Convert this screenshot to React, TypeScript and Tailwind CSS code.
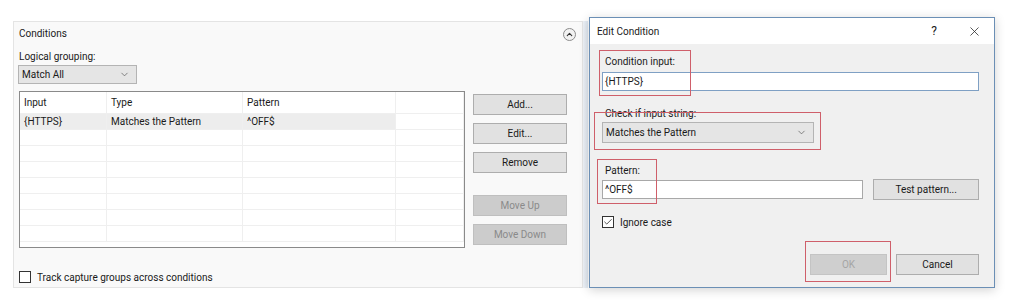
import { Check, ChevronDown, ChevronUp, X } from "lucide-react";

const font = "font-['Roboto','Segoe_UI',sans-serif] text-[10px] text-[#1a1a1a]";

function Button({ label, disabled, className }: { label: string; disabled?: boolean; className?: string }) {
  return (
    <div
      className={
        "flex items-center justify-center h-[21px] border " +
        (disabled
          ? "bg-[#cccccc] border-[#bfbfbf] text-[#8a8a8a] "
          : "bg-[#e1e1e1] border-[#adadad] text-[#1a1a1a] ") +
        (className ?? "")
      }
    >
      {label}
    </div>
  );
}

function CheckBox({ checked }: { checked?: boolean }) {
  return (
    <div className="w-[12px] h-[12px] border border-[#333] bg-white flex items-center justify-center">
      {checked && <Check size={10} strokeWidth={2} className="text-[#333]" />}
    </div>
  );
}

const rows = [
  ["Input", "Type", "Pattern", ""],
  ["{HTTPS}", "Matches the Pattern", "^OFF$", ""],
  ["", "", "", ""],
  ["", "", "", ""],
  ["", "", "", ""],
  ["", "", "", ""],
  ["", "", "", ""],
  ["", "", "", ""],
  ["", "", "", ""],
];

function ConditionsTable() {
  return (
    <div className="w-[446px] h-[157px] border border-[#8a8a8a] bg-white overflow-hidden">
      {rows.map((r, i) => (
        <div
          key={i}
          className={
            "grid grid-cols-[87px_136px_153px_1fr] border-b border-[#efefef] " +
            (i === 0 ? "h-[22px]" : "h-[16px]")
          }
        >
          {r.map((c, j) => (
            <div
              key={j}
              className={
                "flex items-center pl-[4px] border-r border-[#efefef] " +
                (i === 1 && j < 3 ? "bg-[#ededed]" : "")
              }
            >
              {c}
            </div>
          ))}
        </div>
      ))}
    </div>
  );
}

function ConditionsPanel() {
  return (
    <div className="relative mt-[21px] ml-[13px] w-[570px] h-[267px] bg-[#f9f9f9] border border-[#e4e4e4] pl-[5px]">
      <div className="absolute left-[549px] top-[6px] w-[13px] h-[13px] rounded-full border border-[#8c8c8c] bg-[#f2f2f2] flex items-center justify-center">
        <ChevronUp size={9} strokeWidth={3} className="text-[#333]" />
      </div>
      <div className="pt-[4px] h-[20px] leading-[16px]">Conditions</div>
      <div className="mt-[7px] h-[16px] leading-[16px]">Logical grouping:</div>
      <div className="-ml-[1px] w-[119px] h-[19px] bg-[#e5e5e5] border border-[#b4b4b4] flex items-center justify-between pl-[3px] pr-[6px]">
        <span>Match All</span>
        <ChevronDown size={11} strokeWidth={1.5} className="text-[#555]" />
      </div>
      <div className="flex items-start mt-[7px]">
        <ConditionsTable />
        <div className="ml-[8px] mt-[3px] w-[94px] flex flex-col">
          <Button label="Add..." />
          <Button label="Edit..." className="mt-[8px]" />
          <Button label="Remove" className="mt-[8px]" />
          <Button label="Move Up" disabled className="mt-[22px]" />
          <Button label="Move Down" disabled className="mt-[8px]" />
        </div>
      </div>
      <div className="mt-[23px] h-[12px] flex items-center gap-[6px]">
        <CheckBox />
        <span>Track capture groups across conditions</span>
      </div>
    </div>
  );
}

function RedBox({ className }: { className: string }) {
  return <div className={"absolute border border-[#cf5f6a] " + className} />;
}

function EditDialog() {
  return (
    <div className="relative mt-[17px] w-[406px] h-[271px] border border-[#6b8fb5] bg-[#f0f0f0] shadow-[0_2px_10px_rgba(0,0,0,0.18)]">
      <div className="h-[26px] bg-white flex items-center pl-[7px] pr-[12px]">
        <span className="flex-1">Edit Condition</span>
        <span className="mr-[30px] text-[12px]">?</span>
        <X size={15} strokeWidth={1.2} className="text-[#222]" />
      </div>
      <div className="pl-[12px] pr-[15px]">
        <div className="mt-[10px] h-[16px] pl-[3px] leading-[16px]">Condition input:</div>
        <div className="mt-[2px] h-[19px] border border-[#7fa0c4] bg-white flex items-center pl-[2px]">{"{HTTPS}"}</div>
        <div className="mt-[15px] h-[16px] pl-[3px] leading-[16px]">Check if input string:</div>
        <div className="w-[212px] h-[21px] bg-[#e5e5e5] border border-[#b4b4b4] flex items-center justify-between pl-[3px] pr-[6px]">
          <span>Matches the Pattern</span>
          <ChevronDown size={11} strokeWidth={1.5} className="text-[#555]" />
        </div>
        <div className="mt-[20px] h-[16px] pl-[3px] leading-[16px]">Pattern:</div>
        <div className="h-[21px] flex items-center">
          <div className="w-[262px] h-[19px] border border-[#a8a8a8] bg-white flex items-center pl-[2px]">^OFF$</div>
          <Button label="Test pattern..." className="ml-[10px] w-[106px]" />
        </div>
        <div className="mt-[16px] h-[12px] flex items-center gap-[6px]">
          <CheckBox checked />
          <span>Ignore case</span>
        </div>
        <div className="mt-[26px] flex justify-end gap-[9px]">
          <Button label="OK" disabled className="w-[77px] bg-[#cfcfcf] border-[#c4c4c4] text-[#a5a5a5]" />
          <Button label="Cancel" className="w-[83px]" />
        </div>
      </div>
      <RedBox className="left-[9px] top-[32px] w-[92px] h-[46px]" />
      <RedBox className="left-[4px] top-[94px] w-[227px] h-[38px]" />
      <RedBox className="left-[7px] top-[141px] w-[60px] h-[45px]" />
      <RedBox className="left-[215px] top-[223px] w-[86px] h-[41px]" />
    </div>
  );
}

export default function App() {
  return (
    <div className={"w-[1010px] h-[308px] bg-white flex items-start " + font}>
      <ConditionsPanel />
      <div className="mt-[21px] w-[5px] h-[267px] bg-gradient-to-r from-[#eef2f7] to-[#dfe7f0]" />
      <div className="ml-[1px]">
        <EditDialog />
      </div>
    </div>
  );
}
